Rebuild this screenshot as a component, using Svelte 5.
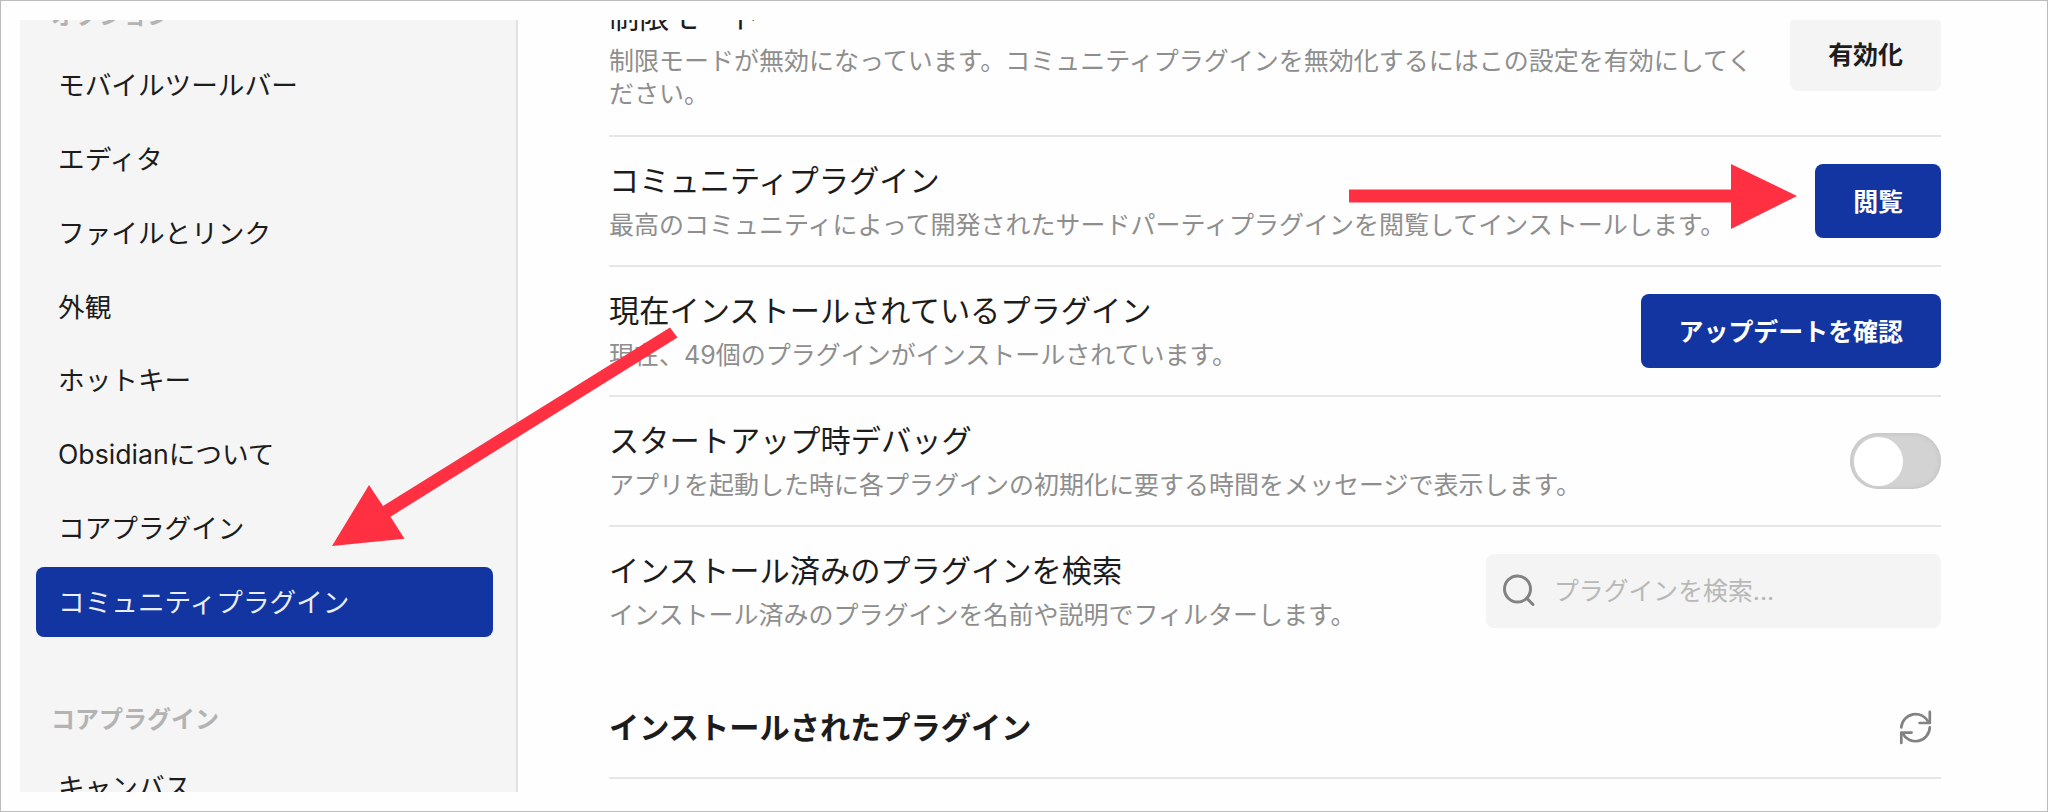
<script>
  const options = [
    'モバイルツールバー',
    'エディタ',
    'ファイルとリンク',
    '外観',
    'ホットキー',
    'Obsidianについて',
    'コアプラグイン',
    'コミュニティプラグイン'
  ];

  let active = $state('コミュニティプラグイン');
  let debug = $state(false);
  let query = $state('');

  // `control` picks what is rendered on the right side of the row.
  const settings = [
    {
      name: '制限モード',
      desc: '制限モードが無効になっています。コミュニティプラグインを無効化するにはこの設定を有効にしてください。',
      control: 'button',
      label: '有効化'
    },
    {
      name: 'コミュニティプラグイン',
      desc: '最高のコミュニティによって開発されたサードパーティプラグインを閲覧してインストールします。',
      control: 'cta',
      label: '閲覧'
    },
    {
      name: '現在インストールされているプラグイン',
      desc: '現在、49個のプラグインがインストールされています。',
      control: 'cta',
      label: 'アップデートを確認'
    },
    {
      name: 'スタートアップ時デバッグ',
      desc: 'アプリを起動した時に各プラグインの初期化に要する時間をメッセージで表示します。',
      control: 'toggle'
    },
    {
      name: 'インストール済みのプラグインを検索',
      desc: 'インストール済みのプラグインを名前や説明でフィルターします。',
      control: 'search'
    }
  ];
</script>

<div class="frame">
  <div class="modal">
    <nav class="sidebar">
      <div class="sidebar-scroll">
        <div class="group-title">オプション</div>
        {#each options as option}
          <button class="nav-item" class:active={option === active} onclick={() => (active = option)}>
            {option}
          </button>
        {/each}
        <div class="group-title second">コアプラグイン</div>
        <button class="nav-item">キャンバス</button>
      </div>
    </nav>

    <main class="content">
      <div class="content-scroll">
        {#each settings as item}
          <section class="setting">
            <div class="info">
              <div class="name">{item.name}</div>
              <div class="desc">{item.desc}</div>
            </div>
            {#if item.control === 'toggle'}
              <button class="toggle" class:on={debug} aria-label={item.name} onclick={() => (debug = !debug)}>
                <span class="thumb"></span>
              </button>
            {:else if item.control === 'search'}
              <label class="search">
                <svg class="search-icon" viewBox="0 0 34 34">
                  <circle cx="15.5" cy="15" r="13" />
                  <path d="M24.8 24.3 L31 30.5" />
                </svg>
                <input type="text" placeholder="プラグインを検索..." bind:value={query} />
              </label>
            {:else}
              <button class="btn" class:cta={item.control === 'cta'}>{item.label}</button>
            {/if}
          </section>
        {/each}

        <section class="setting heading">
          <div class="name">インストールされたプラグイン</div>
          <button class="reload" aria-label="リロード">
            <svg viewBox="0 0 34 36">
              <path d="M2.3 17.4 A14.4 14.4 0 0 1 29.6 12.2" />
              <path d="M30.8 1.9 V13 H20.6" />
              <path d="M30.8 17.4 A14.4 14.4 0 0 1 3.5 23.2" />
              <path d="M2.3 33 V22.6 H12.6" />
            </svg>
          </button>
        </section>
      </div>
    </main>
  </div>

  <!-- Annotation arrows over the settings window -->
  <svg class="arrows" viewBox="0 0 2048 812">
    <polygon points="1349,189.5 1731,189.5 1731,164 1797,196 1731,229 1731,202.5 1349,202.5" />
    <polygon points="670,327.5 677.5,337.5 390.5,516.7 404.5,538.7 332,546 369,485 383,506" />
  </svg>
</div>

<style>
  :global(body) {
    margin: 0;
    background: #fff;
  }

  .frame {
    position: relative;
    box-sizing: border-box;
    width: 2048px;
    height: 812px;
    padding: 19px;
    border: 1px solid #bcbcbc;
    background: #fefefe;
    color: #1c1c1c;
    font-family: Inter, 'Noto Sans CJK JP', sans-serif;
  }

  button,
  input {
    padding: 0;
    border: 0;
    background: none;
    color: inherit;
    font: inherit;
  }

  .modal {
    display: flex;
    height: 772px;
  }

  /* Sidebar */
  .sidebar {
    box-sizing: border-box;
    width: 498px;
    overflow: hidden;
    border-right: 2px solid #e3e3e3;
    background: #f5f5f5;
  }

  .sidebar-scroll {
    display: flex;
    flex-direction: column;
    gap: 3.8px;
    margin-top: -21.5px;
    padding: 0 23px 0 16px;
  }

  .group-title {
    height: 48px;
    padding-left: 15px;
    color: #b3b3b3;
    font-size: 24px;
    font-weight: 600;
    line-height: 34px;
  }

  .group-title.second {
    height: 46px;
    margin-top: 62px;
  }

  .nav-item {
    flex: none;
    height: 70px;
    padding-left: 22px;
    border-radius: 8px;
    font-size: 26.65px;
    line-height: 70px;
    text-align: left;
  }

  .nav-item.active {
    background: #1235a1;
    color: #e9eefc;
  }

  /* Settings list */
  .content {
    flex: 1;
    overflow: hidden;
  }

  .content-scroll {
    width: 1332px;
    margin: -48px 0 0 91px;
  }

  .setting {
    display: flex;
    box-sizing: border-box;
    align-items: center;
    justify-content: space-between;
    gap: 26px;
    height: 130px;
    border-bottom: 2px solid #e6e6e6;
  }

  .setting:first-child {
    height: 165.4px;
  }

  .setting:nth-last-child(2) {
    border-bottom-color: transparent;
  }

  .name {
    font-size: 30.22px;
    line-height: 42px;
  }

  .desc {
    margin-top: 7px;
    color: #8e8e8e;
    font-size: 25px;
    line-height: 33px;
  }

  .btn {
    flex: none;
    height: 74px;
    padding: 0 38px 2px;
    border-radius: 8px;
    background: #f4f4f4;
    font-size: 24.95px;
    font-weight: 600;
  }

  .btn.cta {
    background: #1235a1;
    color: #fff;
  }

  .toggle {
    display: flex;
    flex: none;
    box-sizing: border-box;
    align-items: center;
    width: 91px;
    height: 56px;
    padding: 0 4px;
    border-radius: 28px;
    background: #d3d3d3;
    box-shadow: inset 0 0 5px #bcbcbc;
  }

  .toggle.on {
    justify-content: flex-end;
    background: #1235a1;
  }

  .thumb {
    width: 49px;
    height: 49px;
    border-radius: 50%;
    background: #fff;
  }

  .search {
    display: flex;
    flex: none;
    box-sizing: border-box;
    align-items: center;
    width: 455px;
    height: 74px;
    padding: 0 16px;
    border-radius: 8px;
    background: #f4f4f4;
  }

  .search-icon {
    flex: none;
    width: 34px;
    height: 34px;
  }

  .search-icon,
  .reload svg {
    fill: none;
    stroke: #828282;
    stroke-width: 3;
    stroke-linecap: round;
    stroke-linejoin: round;
  }

  .search input {
    flex: 1;
    min-width: 0;
    margin-left: 18px;
    outline: 0;
    font-size: 24.85px;
  }

  .search input::placeholder {
    color: #b8b8b8;
    opacity: 1;
  }

  .setting.heading {
    height: 101px;
    margin-top: 21px;
  }

  .heading .name {
    font-weight: 700;
  }

  .reload {
    width: 34px;
    height: 36px;
    margin-right: 8px;
  }

  .reload svg {
    display: block;
    width: 34px;
    height: 36px;
    stroke-width: 2.7;
  }

  .arrows {
    position: absolute;
    top: -1px;
    left: -1px;
    width: 2048px;
    height: 812px;
    fill: #ff3042;
    pointer-events: none;
  }
</style>
